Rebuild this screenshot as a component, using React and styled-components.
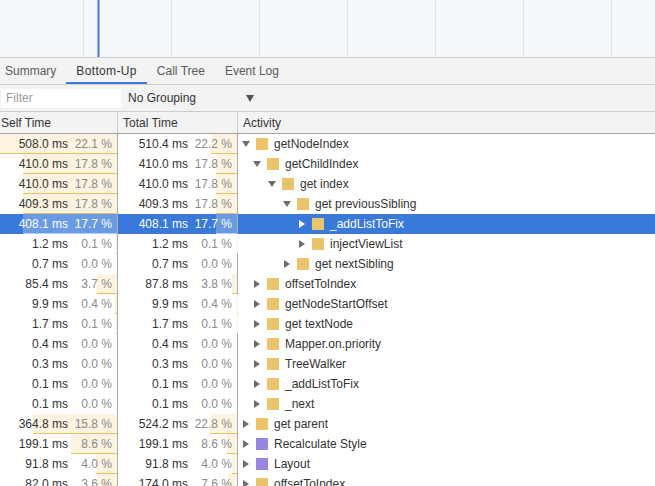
import React from "react";
import styled, { createGlobalStyle, css } from "styled-components";

const Global = createGlobalStyle`
  html, body {
    margin: 0;
    padding: 0;
    background: #fff;
  }
  body {
    width: 655px;
    height: 486px;
    overflow: hidden;
    font-family: "Liberation Sans", Arial, Helvetica, sans-serif;
    font-size: 12px;
    color: #333;
  }
`;

const Page = styled.div`
  display: flex;
  flex-direction: column;
  width: 655px;
  height: 486px;
  overflow: hidden;
`;

const Overview = styled.div`
  height: 57px;
  flex-shrink: 0;
  background: #f5f8fd;
  border-bottom: 1px solid #cfcfcf;
  svg {
    display: block;
  }
`;

const Tabs = styled.div`
  display: flex;
  height: 26px;
  flex-shrink: 0;
  background: #f3f3f3;
  border-bottom: 1px solid #cdcdcd;
`;

const Tab = styled.div`
  display: flex;
  align-items: center;
  padding: 0 10px;
  color: #5a5a5a;
  box-sizing: border-box;
  border-bottom: 2px solid transparent;
  padding-top: 2px;
  &:first-child {
    padding-left: 5px;
  }
  ${(p) =>
    p.active &&
    css`
      color: #333;
      letter-spacing: 0.35px;
      border-bottom-color: #3b78e7;
    `}
`;

const FilterBar = styled.div`
  display: flex;
  align-items: center;
  height: 26px;
  flex-shrink: 0;
  background: #f3f3f3;
  border-bottom: 1px solid #cbcbcb;
`;

const FilterInput = styled.div`
  width: 115px;
  height: 19px;
  margin-left: 1px;
  padding-left: 5px;
  background: #fff;
  color: #999;
  display: flex;
  align-items: center;
`;

const Grouping = styled.div`
  display: flex;
  align-items: center;
  width: 126px;
  margin-left: 7px;
  color: #333;
  justify-content: space-between;
`;

const DropArrow = styled.span`
  width: 0;
  height: 0;
  border-left: 4px solid transparent;
  border-right: 4px solid transparent;
  border-top: 7px solid #555;
  margin-top: 1px;
`;

const columns = "118px 120px 1fr";

const Header = styled.div`
  display: grid;
  grid-template-columns: ${columns};
  height: 21px;
  flex-shrink: 0;
  background: #f3f3f3;
  border-bottom: 1px solid #a3a3a3;
`;

const HeadCell = styled.div`
  display: flex;
  align-items: center;
  padding-left: ${(p) => (p.first ? 1 : 5)}px;
  border-right: 1px solid #cdcdcd;
  &:last-child {
    border-right: none;
  }
`;

const Rows = styled.div`
  display: flex;
  flex-direction: column;
`;

const Row = styled.div`
  display: grid;
  grid-template-columns: ${columns};
  height: 20px;
  flex-shrink: 0;
  ${(p) =>
    p.selected &&
    css`
      background: #3879d9;
      color: #fff;
    `}
`;

const TimeCell = styled.div`
  position: relative;
  display: flex;
  align-items: center;
  justify-content: flex-end;
  padding-right: 5px;
  border-right: 1px solid #acacac;
  white-space: nowrap;
`;

const Bar = styled.div`
  position: absolute;
  top: 0;
  right: 0;
  bottom: 0;
  box-sizing: border-box;
  background: ${(p) => (p.selected ? "rgba(255,255,255,0.25)" : "#fcf3e0")};
  border-bottom: 1px solid
    ${(p) => (p.selected ? "rgba(255,255,255,0.5)" : "#ecc25b")};
`;

const Value = styled.span`
  position: relative;
`;

const Pct = styled.span`
  position: relative;
  width: 44px;
  text-align: right;
  color: ${(p) => (p.selected ? "#fff" : "#8a8a8a")};
`;

const ActivityCell = styled.div`
  display: flex;
  align-items: center;
  padding-left: ${(p) => 3 + p.indent}px;
  white-space: nowrap;
`;

const Toggle = styled.span`
  width: 10px;
  height: 20px;
  margin-right: 5px;
  display: flex;
  align-items: center;
  justify-content: center;
  flex-shrink: 0;
`;

const Arrow = styled.span`
  width: 0;
  height: 0;
  ${(p) =>
    p.open
      ? css`
          border-left: 4px solid transparent;
          border-right: 4px solid transparent;
          border-top: 6px solid ${p.selected ? "#fff" : "#6e6e6e"};
        `
      : css`
          border-top: 4px solid transparent;
          border-bottom: 4px solid transparent;
          border-left: 6px solid ${p.selected ? "#fff" : "#6e6e6e"};
        `}
`;

const Swatch = styled.span`
  width: 12px;
  height: 12px;
  flex-shrink: 0;
  margin-right: 6px;
  background: ${(p) => (p.kind === "render" ? "#9a86e0" : "#e9c46a")};
`;

const indents = [0, 11, 26, 41, 56];
const SELF_MAX = 22.1;

const rows = [
  ["508.0", 22.1, "510.4", 22.2, 0, true, "getNodeIndex"],
  ["410.0", 17.8, "410.0", 17.8, 1, true, "getChildIndex"],
  ["410.0", 17.8, "410.0", 17.8, 2, true, "get index"],
  ["409.3", 17.8, "409.3", 17.8, 3, true, "get previousSibling"],
  ["408.1", 17.7, "408.1", 17.7, 4, false, "_addListToFix", true],
  ["1.2", 0.1, "1.2", 0.1, 4, false, "injectViewList"],
  ["0.7", 0.0, "0.7", 0.0, 3, false, "get nextSibling"],
  ["85.4", 3.7, "87.8", 3.8, 1, false, "offsetToIndex"],
  ["9.9", 0.4, "9.9", 0.4, 1, false, "getNodeStartOffset"],
  ["1.7", 0.1, "1.7", 0.1, 1, false, "get textNode"],
  ["0.4", 0.0, "0.4", 0.0, 1, false, "Mapper.on.priority"],
  ["0.3", 0.0, "0.3", 0.0, 1, false, "TreeWalker"],
  ["0.1", 0.0, "0.1", 0.0, 1, false, "_addListToFix"],
  ["0.1", 0.0, "0.1", 0.0, 1, false, "_next"],
  ["364.8", 15.8, "524.2", 22.8, 0, false, "get parent"],
  ["199.1", 8.6, "199.1", 8.6, 0, false, "Recalculate Style", false, "render"],
  ["91.8", 4.0, "91.8", 4.0, 0, false, "Layout", false, "render"],
  ["82.0", 3.6, "174.0", 7.6, 0, false, "offsetToIndex"],
];

const TimeColumn = ({ value, pct, width, selected }) => (
  <TimeCell>
    {width > 0 && <Bar selected={selected} style={{ width }} />}
    <Value>{value} ms</Value>
    <Pct selected={selected}>{pct.toFixed(1)} %</Pct>
  </TimeCell>
);

const OverviewChart = () => {
  const lines = [];
  for (let x = 83; x < 655; x += 88) lines.push(x);
  return (
    <svg width="655" height="57">
      {lines.map((x) => (
        <rect key={x} x={x} y={0} width={1} height={57} fill="#dde1e8" />
      ))}
      <rect x={97.5} y={0} width={2} height={57} fill="#3c78e4" />
    </svg>
  );
};

export default function App() {
  return (
    <Page>
      <Global />
      <Overview>
        <OverviewChart />
      </Overview>
      <Tabs>
        <Tab>Summary</Tab>
        <Tab active>Bottom-Up</Tab>
        <Tab>Call Tree</Tab>
        <Tab>Event Log</Tab>
      </Tabs>
      <FilterBar>
        <FilterInput>Filter</FilterInput>
        <Grouping>
          No Grouping
          <DropArrow />
        </Grouping>
      </FilterBar>
      <Header>
        <HeadCell first>Self Time</HeadCell>
        <HeadCell>Total Time</HeadCell>
        <HeadCell>Activity</HeadCell>
      </Header>
      <Rows>
        {rows.map(([self, selfPct, total, totalPct, level, open, name, sel, kind], i) => (
          <Row key={i} selected={sel}>
            <TimeColumn
              value={self}
              pct={selfPct}
              width={(selfPct / SELF_MAX) * 117}
              selected={sel}
            />
            <TimeColumn
              value={total}
              pct={totalPct}
              width={(totalPct / 100) * 119}
              selected={sel}
            />
            <ActivityCell indent={indents[level]}>
              <Toggle>
                <Arrow open={open} selected={sel} />
              </Toggle>
              <Swatch kind={kind} />
              {name}
            </ActivityCell>
          </Row>
        ))}
      </Rows>
    </Page>
  );
}
